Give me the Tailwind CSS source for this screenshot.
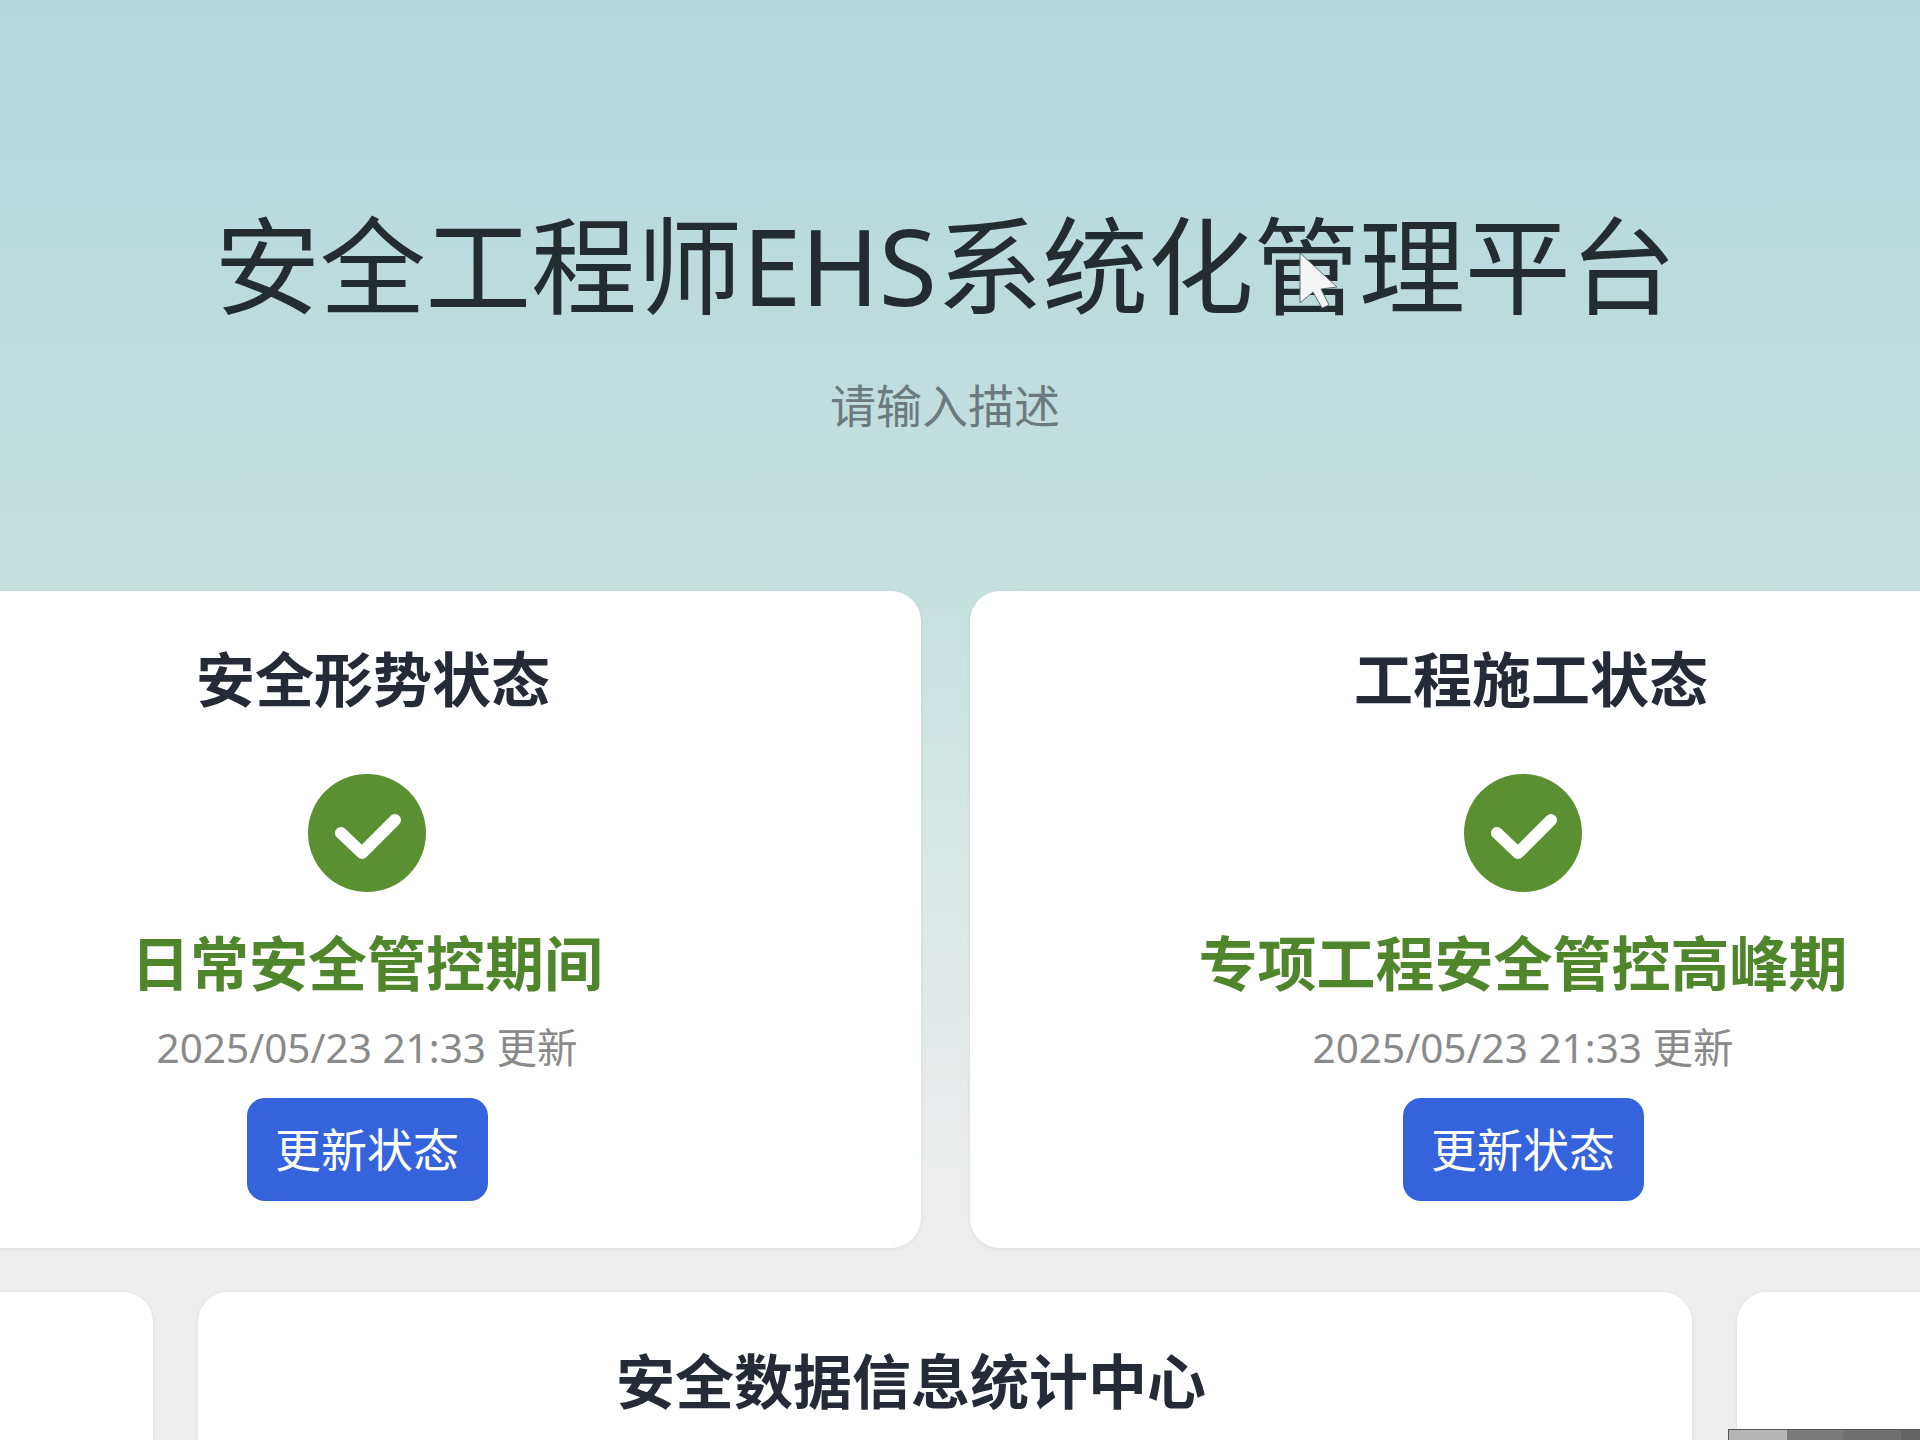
<!DOCTYPE html>
<html lang="zh-CN">
<head>
    <meta charset="UTF-8">
    <meta name="viewport" content="width=device-width, initial-scale=1.0">
    <title>安全工程师EHS系统化管理平台</title>
    <script src="https://cdn.jsdelivr.net/npm/@tailwindcss/browser@4"></script>
</head>
<body class="h-[1440px] overflow-hidden bg-[#eeeeee] font-['Noto_Sans','Noto_Sans_CJK_SC',sans-serif]">
    <div class="relative h-[1440px] overflow-hidden bg-[linear-gradient(180deg,#b4d7dc_0px,#bcdcdc_300px,#c6e2df_600px,#dce8e6_900px,#eeeeee_1180px)]">
        <!-- 顶部标题 -->
        <header class="flex h-[591px] flex-col items-center">
            <h1 class="mt-[200px] ml-[-30px] text-[106px] leading-[130px] font-normal tracking-[-0.4px] whitespace-nowrap text-[#232d30]">安全工程师EHS系统化管理平台</h1>
            <p class="mt-[45px] ml-[-30px] text-[46px] leading-[60px] text-[#6b7a7d]">请输入描述</p>
        </header>

        <!-- 状态卡片 -->
        <div class="ml-[-187px] flex w-[2263px] gap-[49px]">
            <div class="flex h-[657px] w-[1108px] shrink-0 flex-col items-center rounded-[30px] bg-white shadow-[0_1px_4px_rgba(0,0,0,0.08)]">
                <h2 class="mt-[52px] ml-[12px] text-[59px] leading-[72px] font-bold text-[#252b36]">安全形势状态</h2>
                <div class="mt-[59px] h-[118px] w-[118px] rounded-full bg-[#5a8f32]">
                    <svg class="h-[118px] w-[118px]" viewBox="0 0 118 118" fill="none" stroke="white" stroke-width="12" stroke-linecap="round" stroke-linejoin="round"><path d="M33 59 L54 79 L87 46"/></svg>
                </div>
                <div class="mt-[35px] text-[59px] leading-[72px] font-bold text-[#4f862c]">日常安全管控期间</div>
                <div class="mt-[24px] text-[40.5px] leading-[50px] text-[#8a8a8a]">2025/05/23 21:33 更新</div>
                <button class="mt-[25px] h-[103px] w-[241px] rounded-[18px] bg-[#3563dc] text-[46px] text-white">更新状态</button>
            </div>
            <div class="flex h-[657px] w-[1106px] shrink-0 flex-col items-center rounded-[30px] bg-white shadow-[0_1px_4px_rgba(0,0,0,0.08)]">
                <h2 class="mt-[52px] ml-[16px] text-[59px] leading-[72px] font-bold text-[#252b36]">工程施工状态</h2>
                <div class="mt-[59px] h-[118px] w-[118px] rounded-full bg-[#5a8f32]">
                    <svg class="h-[118px] w-[118px]" viewBox="0 0 118 118" fill="none" stroke="white" stroke-width="12" stroke-linecap="round" stroke-linejoin="round"><path d="M33 59 L54 79 L87 46"/></svg>
                </div>
                <div class="mt-[35px] text-[59px] leading-[72px] font-bold text-[#4f862c]">专项工程安全管控高峰期</div>
                <div class="mt-[24px] text-[40.5px] leading-[50px] text-[#8a8a8a]">2025/05/23 21:33 更新</div>
                <button class="mt-[25px] h-[103px] w-[241px] rounded-[18px] bg-[#3563dc] text-[46px] text-white">更新状态</button>
            </div>
        </div>

        <!-- 第二行 -->
        <div class="mt-[44px] ml-[-400px] flex w-[2600px] gap-[45px]">
            <div class="h-[300px] w-[553px] shrink-0 rounded-[30px] bg-white shadow-[0_1px_4px_rgba(0,0,0,0.08)]"></div>
            <div class="flex h-[300px] w-[1494px] shrink-0 flex-col items-center rounded-[30px] bg-white shadow-[0_1px_4px_rgba(0,0,0,0.08)]">
                <h2 class="mt-[53px] ml-[-68px] text-[59px] leading-[72px] font-bold text-[#252b36]">安全数据信息统计中心</h2>
            </div>
            <div class="h-[300px] w-[500px] shrink-0 rounded-[30px] bg-white shadow-[0_1px_4px_rgba(0,0,0,0.08)]"></div>
        </div>

        <!-- 鼠标指针 -->
        <svg class="absolute top-[252px] left-[1298px] h-[58px] w-[42px]" viewBox="0 0 42 58"><path d="M2 1 L2 51 L15 40 L24 56 L31 53 L23 37 L39 35 Z" fill="#f4f6f6" stroke="#5d6b6d" stroke-width="1"/></svg>

        <!-- 右下角视频控件 -->
        <div class="absolute top-[1429px] left-[1728px] flex h-[11px] w-[192px] border-t border-l border-[#555]">
            <div class="w-[58px] bg-[#b5b5b5]"></div>
            <div class="w-[56px] bg-[#7a7a7a]"></div>
            <div class="w-[58px] bg-[#707070]"></div>
            <div class="flex-1 bg-[#646464]"></div>
        </div>
    </div>
</body>
</html>
